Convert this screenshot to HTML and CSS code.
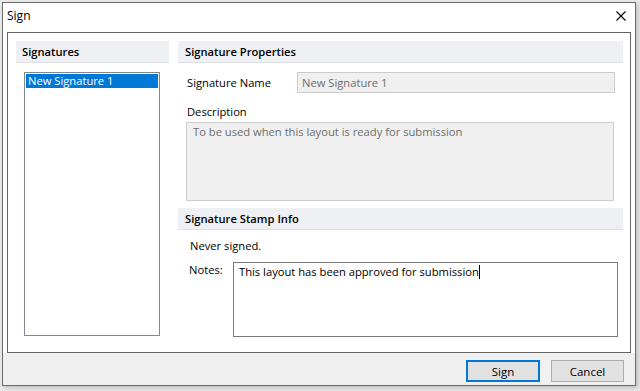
FILE: index.html
```html
<!DOCTYPE html>
<html>
<head>
<meta charset="utf-8">
<link rel="stylesheet" href="styles.css">
</head>
<body>
<div class="window">
  <div class="titlebar">
    <span class="title">Sign</span>
    <svg class="close" width="10" height="10" viewBox="0 0 10 10"><path d="M0.5 0.5 L9.5 9.5 M9.5 0.5 L0.5 9.5" stroke="#000" stroke-width="1.1" fill="none"/></svg>
  </div>
  <div class="frame">
    <div class="leftcol">
      <div class="section-head">Signatures</div>
      <div class="listbox">
        <div class="item selected">New Signature 1</div>
      </div>
    </div>
    <div class="rightcol">
      <div class="section-head">Signature Properties</div>
      <div class="name-row">
        <span class="label name-label">Signature Name</span>
        <div class="input disabled">New Signature 1</div>
      </div>
      <div class="label desc-label">Description</div>
      <div class="textarea disabled">To be used when this layout is ready for submission</div>
      <div class="section-head stamp-head">Signature Stamp Info</div>
      <div class="never">Never signed.</div>
      <div class="notes-row">
        <span class="label notes-label">Notes:</span>
        <div class="notes">This layout has been approved for submission<span class="caret"></span></div>
      </div>
    </div>
  </div>
  <div class="footer">
    <button class="btn default">Sign</button>
    <button class="btn">Cancel</button>
  </div>
</div>
</body>
</html>
```

FILE: styles.css
```css
html, body {
  margin: 0;
  padding: 0;
}
body {
  width: 640px;
  height: 391px;
  background: #e9e9e9;
  font-family: "Segoe UI", "Open Sans", "Noto Sans", sans-serif;
  font-size: 11.2px;
  color: #000;
  overflow: hidden;
}
.window {
  margin: 2px 0 0 2px;
  width: 632px;
  height: 382px;
  border: 1px solid #6b6b6b;
  background: #fff;
  display: flex;
  flex-direction: column;
  box-shadow: 2px 2px 4px rgba(0,0,0,0.18);
}
.titlebar {
  height: 29px;
  flex: none;
  display: flex;
  align-items: center;
  justify-content: space-between;
  padding: 0 9px 0 4px;
}
.title {
  font-size: 12px;
  line-height: 16px;
  margin-top: -4px;
}
.close {
  margin-top: -3px;
}
.frame {
  flex: none;
  margin: 0 4px 0 4px;
  height: 311px;
  border: 1px solid #646464;
  display: flex;
  padding: 8px 7px 0 8px;
  gap: 9px;
}
.leftcol {
  width: 153px;
  display: flex;
  flex-direction: column;
}
.rightcol {
  flex: 1;
  display: flex;
  flex-direction: column;
}
.section-head {
  height: 21px;
  background: #eff0f4;
  border-bottom: 1px solid #dfe0e5;
  font-weight: 600;
  line-height: 21px;
  padding-left: 6px;
}
.rightcol .section-head {
  padding-left: 7px;
}
.listbox {
  margin: 9px 9px 0 8px;
  height: 260px;
  border: 1px solid #828790;
  padding: 1px;
}
.item {
  height: 14px;
  line-height: 14px;
  padding-left: 2px;
}
.selected {
  background: #0078d7;
  color: #fff;
}
.name-row {
  display: flex;
  align-items: center;
  margin-top: 9px;
  padding-left: 9px;
  padding-right: 8px;
}
.name-label {
  width: 110px;
}
.input {
  flex: 1;
  height: 19px;
  line-height: 19px;
  padding-left: 4px;
  border: 1px solid #cccccc;
}
.disabled {
  background: #f0f0f0;
  color: #6d6d6d;
}
.desc-label {
  margin-top: 11px;
  padding-left: 9px;
  line-height: 16px;
}
.textarea {
  margin: 2px 9px 0 8px;
  border: 1px solid #cccccc;
  padding: 2px 6px;
  line-height: 14px;
  box-sizing: border-box;
  height: 79px;
}
.stamp-head {
  margin-top: 7px;
}
.never {
  margin-top: 8px;
  padding-left: 12px;
  line-height: 16px;
}
.notes-row {
  display: flex;
  margin-top: 8px;
  padding-left: 11px;
  padding-right: 5px;
}
.notes-label {
  width: 44px;
  line-height: 16px;
}
.notes {
  flex: 1;
  height: 71px;
  border: 1px solid #7a7a7a;
  padding: 1px 5px;
  line-height: 16px;
}
.caret {
  display: inline-block;
  width: 0;
  height: 14px;
  border-left: 1px solid #000;
  vertical-align: -3px;
}
.footer {
  flex: 1;
  background: #f0f0f0;
  display: flex;
  justify-content: flex-end;
  align-items: flex-start;
  padding: 7px 11px 0 0;
  gap: 11px;
}
.btn {
  width: 73px;
  height: 22px;
  background: #e1e1e1;
  border: 1px solid #adadad;
  font-family: inherit;
  font-size: 11.5px;
  color: #000;
  padding: 0;
  margin: 0;
}
.btn.default {
  border: 2px solid #0078d7;
  width: 74px;
}
```
